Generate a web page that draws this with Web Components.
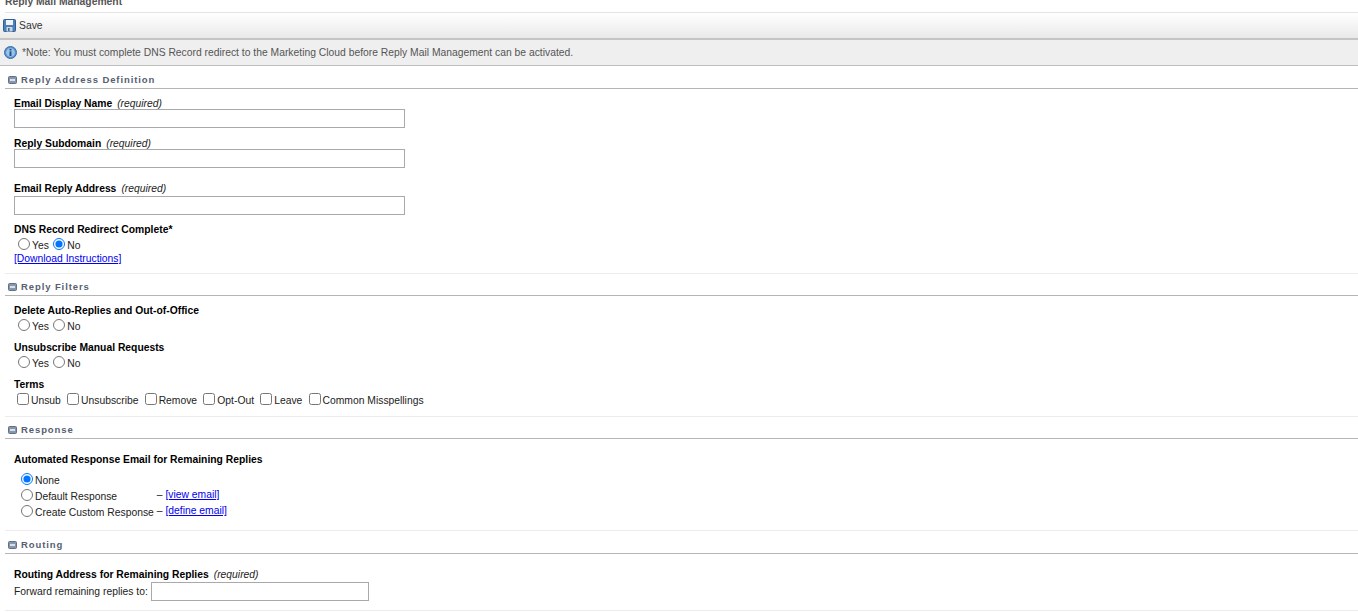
<!DOCTYPE html>
<html lang="en"><head><meta charset="utf-8"><title>Reply Mail Management</title>
<style>
html,body{margin:0;padding:0;height:612px;overflow:hidden;background:#fff;font:10.33px/14px "Liberation Sans",Arial,sans-serif;color:#000}
</style></head><body>
<x-page>
<x-title>Reply Mail Management</x-title>
<x-toolbar>Save</x-toolbar>
<x-note>*Note: You must complete DNS Record redirect to the Marketing Cloud before Reply Mail Management can be activated.</x-note>
<x-section heading="Reply Address Definition" style="--ht:7px;--pb:9px">
  <x-label req top="8">Email Display Name</x-label>
  <x-text top="0" width="391"></x-text>
  <x-label req top="9">Reply Subdomain</x-label>
  <x-text top="0" width="391"></x-text>
  <x-label req top="14">Email Reply Address</x-label>
  <x-text top="2" width="391"></x-text>
  <x-label top="8">DNS Record Redirect Complete*</x-label>
  <x-options><x-opt name="dns">Yes</x-opt><x-opt name="dns" checked>No</x-opt></x-options>
  <x-link>[Download Instructions]</x-link>
</x-section>
<x-section heading="Reply Filters" style="--pb:10px">
  <x-label top="8">Delete Auto-Replies and Out-of-Office</x-label>
  <x-options><x-opt name="a">Yes</x-opt><x-opt name="a">No</x-opt></x-options>
  <x-label top="9">Unsubscribe Manual Requests</x-label>
  <x-options><x-opt name="b">Yes</x-opt><x-opt name="b">No</x-opt></x-options>
  <x-label top="9">Terms</x-label>
  <x-options boxes><x-opt type="checkbox">Unsub</x-opt><x-opt type="checkbox">Unsubscribe</x-opt><x-opt type="checkbox">Remove</x-opt><x-opt type="checkbox">Opt-Out</x-opt><x-opt type="checkbox">Leave</x-opt><x-opt type="checkbox">Common Misspellings</x-opt></x-options>
</x-section>
<x-section heading="Response" style="--pb:11px">
  <x-label top="14">Automated Response Email for Remaining Replies</x-label>
  <x-response></x-response>
</x-section>
<x-section heading="Routing" style="--ht:7px;--pb:9px">
  <x-label req top="14">Routing Address for Remaining Replies</x-label>
  <x-forward>Forward remaining replies to:</x-forward>
</x-section>
</x-page>
<script>
const def=(name,html,init)=>customElements.define(name,class extends HTMLElement{
  connectedCallback(){ if(this.shadowRoot) return; this.attachShadow({mode:'open'}).innerHTML=typeof html==='function'?html(this):html; init&&init(this); }
});
def('x-page',`<style>:host{display:block}</style><slot></slot>`);
def('x-title',`<style>:host{display:flex;align-items:flex-end;height:12px;overflow:hidden;margin:0 0 0 5px;border-bottom:1px solid #e3e3e3;font-weight:bold;color:#555}
span{display:block;margin-bottom:3px}</style><span><slot></slot></span>`);
def('x-toolbar',`<style>:host{display:flex;align-items:center;gap:3px;height:25px;padding-left:3px;background:linear-gradient(#fff,#e9e9e9);border-bottom:2px solid #c4c4c4;color:#333}
svg{display:block}</style>
<svg width="13" height="13" viewBox="0 0 13 13"><rect x=".5" y=".5" width="12" height="12" rx="1" fill="#4f80b4" stroke="#2f5f94"/><rect x="3" y="1" width="7" height="5" fill="#eef3f8"/><rect x="3.5" y="8" width="6" height="4.5" fill="#c9d6e3"/><rect x="5" y="9" width="1.6" height="3" fill="#3d6a9c"/></svg><span><slot></slot></span>`);
def('x-note',`<style>:host{display:flex;align-items:center;gap:5px;height:25px;padding-left:4px;background:#efefef;border-bottom:1px solid #bdbdbd;color:#555}
svg{display:block}</style>
<svg width="13" height="13" viewBox="0 0 13 13"><circle cx="6.5" cy="6.5" r="6" fill="#5b93cf" stroke="#3a6fa8"/><circle cx="6.5" cy="6.5" r="4.4" fill="#9cc3e8"/><rect x="5.5" y="5.4" width="2" height="4.6" fill="#24558c"/><rect x="5.5" y="2.8" width="2" height="1.7" fill="#24558c"/></svg><span><slot></slot></span>`);
def('x-section',t=>`<style>:host{display:block;margin-left:5px;border-bottom:1px solid #ececec;padding-bottom:var(--pb,9px)}
.h{display:flex;align-items:center;gap:4px;height:15px;padding:var(--ht,6px) 0 0 3px;border-bottom:1px solid #b5b5b5;font-weight:bold;font-size:9.5px;letter-spacing:.9px;color:#566072}
svg{display:block;margin-bottom:1px}span{margin-bottom:1px}.b{padding-left:9px}</style>
<div class="h"><svg width="9" height="8" viewBox="0 0 9 8"><rect x=".5" y=".5" width="8" height="7" rx="1" fill="#8497ad" stroke="#5f7187"/><rect x="2" y="3.3" width="5" height="1.4" fill="#fff"/></svg><span>${t.getAttribute('heading')}</span></div>
<div class="b"><slot></slot></div>`);
def('x-label',t=>`<style>:host{display:block;font-weight:bold;height:12px;margin-top:${t.getAttribute('top')||0}px}
i{font-weight:normal;margin-left:5px;color:#222}</style><slot></slot>${t.hasAttribute('req')?'<i>(required)</i>':''}`);
def('x-text',t=>`<style>:host{display:block;margin-top:${t.getAttribute('top')||0}px}
input{display:block;box-sizing:border-box;width:${t.getAttribute('width')}px;height:19px;margin:0;border:1px solid #a9a9a9;background:#fff;padding:0 2px}</style><input type="text" aria-label="text">`);
def('x-options',t=>`<style>:host{display:flex;align-items:center;gap:${t.hasAttribute('boxes')?6.2:4.4}px;height:14px;margin-top:2px;padding-left:${t.hasAttribute('boxes')?3:4}px;color:#222}</style><slot></slot>`);
def('x-opt',t=>`<style>:host{display:inline-flex;align-items:center;gap:2px;color:#222}
input{margin:0;width:12px;height:12px}span{position:relative;top:2px}</style><input type="${t.getAttribute('type')||'radio'}" name="${t.getAttribute('name')||''}" ${t.hasAttribute('checked')?'checked':''}><span><slot></slot></span>`);
def('x-link',`<style>:host{display:block;height:12px;margin-top:1px}a{color:#00e}</style><a href="#"><slot></slot></a>`);
def('x-response',`<style>:host{display:grid;grid-template-columns:auto auto;justify-content:start;column-gap:3px;margin:6px 0 0 7px;grid-auto-rows:16px;color:#222;align-items:center}
label{display:flex;align-items:center;gap:2px}input{margin:0;width:12px;height:12px}span{position:relative;top:2px}a{color:#00e}</style>
<label style="grid-column:1/3"><input type="radio" name="r" checked><span>None</span></label>
<label><input type="radio" name="r"><span>Default Response</span></label><div>– <a href="#">[view email]</a></div>
<label><input type="radio" name="r"><span>Create Custom Response</span></label><div>– <a href="#">[define email]</a></div>`);
def('x-forward',`<style>:host{display:flex;align-items:center;gap:3px;margin-top:2px;color:#222}
input{box-sizing:border-box;width:218px;height:19px;margin:0;border:1px solid #a9a9a9;background:#fff}</style><span><slot></slot></span><input type="text" aria-label="Forward remaining replies to">`);
</script>
</body></html>
